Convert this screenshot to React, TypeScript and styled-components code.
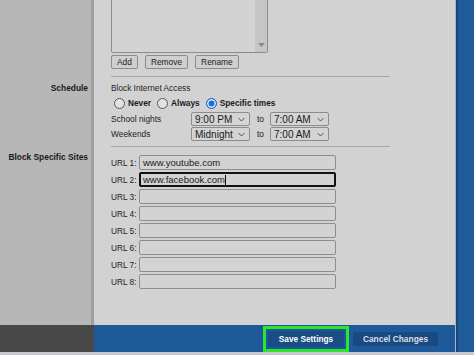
import React from "react";
import styled, { createGlobalStyle } from "styled-components";

const GlobalStyle = createGlobalStyle`
  html, body {
    margin: 0;
    padding: 0;
    overflow: hidden;
  }

  body {
    font-family: "Liberation Sans", Arial, sans-serif;
    color: #222;
  }
`;

const urls = ["www.youtube.com", "www.facebook.com", "", "", "", "", "", ""];

const Chevron: React.FC = () => (
  <svg width="7" height="5" viewBox="0 0 7 5" fill="none">
    <path d="M0.5 1 L3.5 4 L6.5 1" stroke="#444" strokeWidth="0.9" />
  </svg>
);

const Select: React.FC<{ value: string }> = ({ value }) => (
  <SelectBox>
    <span>{value}</span>
    <Chevron />
  </SelectBox>
);

const App: React.FC = () => {
  return (
    <Page>
      <GlobalStyle />
      <Main>
        <Body>
          <Content>
            <SideLabel />
            <Field>
              <ListBox>
                <ScrollTrack>
                  <svg width="7" height="4" viewBox="0 0 7 4">
                    <path d="M0 0 L7 0 L3.5 4 Z" fill="#8a8a8a" />
                  </svg>
                </ScrollTrack>
              </ListBox>
              <ButtonRow>
                <SmallButton>Add</SmallButton>
                <SmallButton>Remove</SmallButton>
                <SmallButton>Rename</SmallButton>
              </ButtonRow>
              <Divider $top={7} />
            </Field>

            <SideLabel $pad={5}>Schedule</SideLabel>
            <Field $pad={5}>
              <Caption>Block Internet Access</Caption>
              <RadioRow>
                <RadioOption>
                  <Radio />
                  Never
                </RadioOption>
                <RadioOption>
                  <Radio />
                  Always
                </RadioOption>
                <RadioOption>
                  <Radio $checked />
                  Specific times
                </RadioOption>
              </RadioRow>
              <TimeRow $top={2}>
                <TimeLabel>School nights</TimeLabel>
                <Select value="9:00 PM" />
                <To>to</To>
                <Select value="7:00 AM" />
              </TimeRow>
              <TimeRow $top={1}>
                <TimeLabel>Weekends</TimeLabel>
                <Select value="Midnight" />
                <To>to</To>
                <Select value="7:00 AM" />
              </TimeRow>
              <Divider $top={5} />
            </Field>

            <SideLabel $pad={4}>Block Specific Sites</SideLabel>
            <Field $pad={8}>
              <UrlList>
                {urls.map((url, i) => (
                  <UrlRow key={i}>
                    <UrlLabel>URL {i + 1}:</UrlLabel>
                    <UrlInput $focused={i === 1}>
                      {url}
                      {i === 1 && <Caret />}
                    </UrlInput>
                  </UrlRow>
                ))}
              </UrlList>
            </Field>

            <SideLabel />
            <Field />
          </Content>

          <Footer>
            <FooterSide />
            <FooterBar>
              <SaveButton>Save Settings</SaveButton>
              <CancelButton>Cancel Changes</CancelButton>
            </FooterBar>
          </Footer>
        </Body>
        <RightStrip />
      </Main>
      <BottomStrip />
    </Page>
  );
};

const Page = styled.div`
  width: 474px;
  height: 355px;
  display: flex;
  flex-direction: column;
  background: #d2d2d2;
`;

const Main = styled.div`
  flex: 1;
  display: flex;
  min-height: 0;
`;

const Body = styled.div`
  flex: 1;
  display: flex;
  flex-direction: column;
  min-width: 0;
`;

const Content = styled.div`
  flex: 1;
  display: grid;
  grid-template-columns: 94px 1fr;
  grid-template-rows: auto auto auto 1fr;
  overflow: hidden;
`;

const SideLabel = styled.div<{ $pad?: number }>`
  background: #b7b7b7;
  border-right: 3px solid #a0a0a0;
  box-sizing: border-box;
  padding: ${(p) => p.$pad ?? 0}px 3px 0 0;
  text-align: right;
  font-size: 8.4px;
  font-weight: bold;
  line-height: 12px;
  color: #1a1a1a;
  white-space: nowrap;
`;

const Field = styled.div<{ $pad?: number }>`
  background: #d2d2d2;
  padding: ${(p) => p.$pad ?? 0}px 0 0 17px;
`;

const ListBox = styled.div`
  margin-top: -2px;
  width: 157px;
  height: 55px;
  box-sizing: border-box;
  border: 1px solid #8c8c8c;
  border-radius: 2px;
  background: #d3d3d3;
  display: flex;
  justify-content: flex-end;
`;

const ScrollTrack = styled.div`
  width: 12px;
  background: #c6c6c6;
  display: flex;
  align-items: flex-end;
  justify-content: center;
  padding-bottom: 5px;
  box-sizing: border-box;
`;

const ButtonRow = styled.div`
  display: flex;
  gap: 7px;
  margin-top: 2px;
`;

const SmallButton = styled.div`
  height: 14px;
  box-sizing: border-box;
  padding: 0 5px;
  border: 1px solid #8c8c8c;
  border-radius: 2px;
  background: #cfcfcf;
  font-size: 8.4px;
  line-height: 12px;
  color: #222;
`;

const Divider = styled.div<{ $top: number }>`
  margin-top: ${(p) => p.$top}px;
  width: 279px;
  height: 1px;
  background: #a6a6a6;
`;

const Caption = styled.div`
  font-size: 8.3px;
  line-height: 12px;
  color: #222;
`;

const RadioRow = styled.div`
  display: flex;
  align-items: center;
  height: 14px;
  margin-top: 2px;
  padding-left: 3px;
`;

const RadioOption = styled.label`
  display: flex;
  align-items: center;
  gap: 3px;
  margin-right: 6px;
  font-size: 8.3px;
  font-weight: bold;
  color: #1a1a1a;
`;

const Radio = styled.span<{ $checked?: boolean }>`
  width: 11px;
  height: 11px;
  box-sizing: border-box;
  border-radius: 50%;
  border: 1px solid ${(p) => (p.$checked ? "#1a66cc" : "#555")};
  background: ${(p) => (p.$checked ? "#1a6fdc" : "#e2e2e2")};
  box-shadow: ${(p) => (p.$checked ? "inset 0 0 0 1.5px #e8eef8" : "none")};
`;

const TimeRow = styled.div<{ $top: number }>`
  display: flex;
  align-items: center;
  margin-top: ${(p) => p.$top}px;
  height: 14px;
`;

const TimeLabel = styled.span`
  width: 80px;
  font-size: 8.4px;
  color: #222;
`;

const SelectBox = styled.div`
  width: 59px;
  height: 14px;
  box-sizing: border-box;
  border: 1px solid #8c8c8c;
  border-radius: 2px;
  background: #d4d4d4;
  display: flex;
  align-items: center;
  justify-content: space-between;
  padding: 0 4px 0 3px;
  font-size: 10px;
  color: #1a1a1a;
`;

const To = styled.span`
  margin: 0 6px 0 7px;
  font-size: 8.4px;
  color: #222;
`;

const UrlList = styled.div`
  display: flex;
  flex-direction: column;
  gap: 2px;
`;

const UrlRow = styled.div`
  display: flex;
  align-items: center;
`;

const UrlLabel = styled.span`
  width: 28px;
  font-size: 8.3px;
  color: #222;
`;

const UrlInput = styled.div<{ $focused?: boolean }>`
  width: 197px;
  height: 15px;
  box-sizing: border-box;
  border: ${(p) => (p.$focused ? "2px solid #111" : "1px solid #8e8e8e")};
  border-radius: 2px;
  background: #d3d3d3;
  padding-left: ${(p) => (p.$focused ? 2 : 3)}px;
  font-size: 9.5px;
  line-height: ${(p) => (p.$focused ? 11 : 13)}px;
  color: #1a1a1a;
  display: flex;
  align-items: center;
`;

const Caret = styled.span`
  width: 1px;
  height: 10px;
  background: #111;
`;

const Footer = styled.div`
  height: 27px;
  display: grid;
  grid-template-columns: 94px 1fr;
`;

const FooterSide = styled.div`
  background: #484848;
`;

const FooterBar = styled.div`
  background: #1e5a9a;
  display: flex;
  align-items: center;
  justify-content: flex-end;
  gap: 4px;
  padding-right: 17px;
`;

const SaveButton = styled.div`
  align-self: flex-end;
  width: 86px;
  height: 26px;
  box-sizing: border-box;
  border: 3px solid #2ee52e;
  background: #1e5a9a;
  display: flex;
  align-items: center;
  justify-content: center;
  font-size: 8.3px;
  font-weight: bold;
  color: #fff;
  box-shadow: inset 0 0 0 2px #1e5a9a, inset 0 0 0 20px #1a4c86;
`;

const CancelButton = styled.div`
  width: 85px;
  height: 14px;
  background: #1a4a82;
  display: flex;
  align-items: center;
  justify-content: center;
  font-size: 8.4px;
  font-weight: bold;
  color: #d9dee6;
`;

const RightStrip = styled.div`
  width: 19px;
  box-sizing: border-box;
  border-left: 1px solid #aab6c6;
  background: #1f5a99;
  box-shadow: inset 2px 0 0 #184679;
`;

const BottomStrip = styled.div`
  height: 3px;
  background: #c6cbd3;
`;

export default App;
